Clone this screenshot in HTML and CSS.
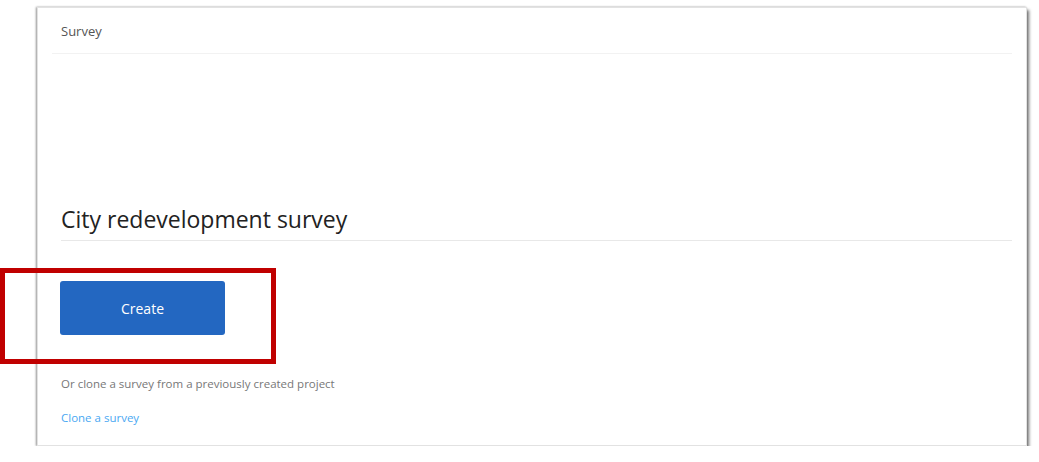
FILE: index.html
```html
<!doctype html>
<html lang="en">
<head>
  <meta charset="UTF-8"/>
  <meta name="viewport" content="width=device-width, initial-scale=1.0"/>
  <title>Survey</title>
  <link rel="stylesheet" href="styles.css">
</head>
<body>
  <div class="panel">
    <div class="panel-header">Survey</div>

    <div class="panel-body">
      <h2 class="survey-title">City redevelopment survey</h2>

      <button class="btn" id="createButton">Create</button>

      <p class="hint">Or clone a survey from a previously created project</p>
      <a class="clone-link" href="#">Clone a survey</a>
    </div>
  </div>

  <!-- annotation box around the Create button -->
  <div class="highlight"></div>
</body>
</html>
```

FILE: styles.css
```css
body {
  margin: 0;
  padding: 0;
  background: #fff;
  font-family: 'Open Sans', 'Noto Sans', sans-serif;
  color: #333;
}

.panel {
  box-sizing: border-box;
  margin: 7px 0 0 37px;
  width: 990px;
  height: 439px;
  padding: 0 14px;
  background: #fff;
  border: 1px solid #e2e2e2;
  box-shadow: -1px 0 2px rgba(0,0,0,0.4), 2px 3px 3px rgba(0,0,0,0.55);
}

.panel-header {
  padding: 14px 9px 13px;
  font-size: 13px;
  line-height: 18px;
  color: #555;
  border-bottom: 1px solid #f2f2f2;
}

.panel-body {
  padding: 0 0 0 9px;
}

.survey-title {
  margin: 149px 0 0;
  padding: 0 0 5px;
  font-size: 23px;
  line-height: 32px;
  font-weight: normal;
  color: #222;
  border-bottom: 1px solid #e8e8e8;
}

.btn {
  display: block;
  margin-top: 40px;
  margin-left: -1px;
  width: 165px;
  height: 54px;
  background: #2367c1;
  color: #fff;
  font-family: inherit;
  font-size: 14px;
  border: none;
  border-radius: 3px;
  cursor: pointer;
}

.btn:hover {
  background: #1d5aab;
}

.hint {
  margin: 40px 0 0;
  font-size: 11.5px;
  line-height: 18px;
  color: #777;
}

.clone-link {
  display: inline-block;
  margin-top: 16px;
  font-size: 11.5px;
  line-height: 18px;
  color: #4aa8f2;
  text-decoration: none;
}

.highlight {
  position: absolute;
  left: 0;
  top: 268px;
  width: 266px;
  height: 86px;
  border: 5px solid #c00000;
}
```
